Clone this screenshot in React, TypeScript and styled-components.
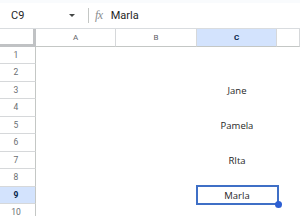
import React from "react";
import styled, { createGlobalStyle } from "styled-components";

const Global = createGlobalStyle`
  html, body { margin: 0; padding: 0; background: #ffffff; }
  body { font-family: Roboto, "Liberation Sans", Arial, sans-serif; overflow: hidden; }
`;

const Page = styled.div`
  width: 300px;
  height: 216px;
  overflow: hidden;
  background: #ffffff;
`;

const FormulaBar = styled.div`
  height: 29px;
  box-sizing: border-box;
  border-top: 3px solid #f9fbfd;
  border-bottom: 1px solid #d9dcdf;
  display: flex;
  align-items: center;
  background: #ffffff;
`;

const NameBox = styled.div`
  width: 58px;
  padding-left: 11px;
  font-size: 11px;
  color: #1f1f1f;
`;

const Caret = styled.div`
  width: 0;
  height: 0;
  border-left: 3px solid transparent;
  border-right: 3px solid transparent;
  border-top: 3.5px solid #444746;
  margin-right: 13px;
`;

const Divider = styled.div`
  width: 1px;
  height: 15px;
  background: #c4c7c5;
  margin-right: 6px;
`;

const Fx = styled.span`
  font-family: "Liberation Serif", "DejaVu Serif", serif;
  font-style: italic;
  font-size: 12px;
  color: #8a8d90;
  margin-right: 8px;
  letter-spacing: -0.5px;
`;

const FormulaText = styled.div`
  font-size: 11px;
  color: #1f1f1f;
`;

const Grid = styled.div`
  display: grid;
  grid-template-columns: 36px 80px 81px 80px 1fr;
  grid-auto-rows: 17.5px;
`;

const Corner = styled.div`
  box-sizing: border-box;
  border-right: 3px solid #c0c2c4;
  border-bottom: 3px solid #c0c2c4;
  background: #ffffff;
`;

const ColHead = styled.div<{ $active?: boolean }>`
  box-sizing: border-box;
  border-right: 1px solid #d6d8da;
  border-bottom: 1px solid #c4c7c5;
  background: ${(p) => (p.$active ? "#d3e3fd" : "#ffffff")};
  color: ${(p) => (p.$active ? "#041e49" : "#5f6368")};
  font-weight: ${(p) => (p.$active ? 700 : 400)};
  font-size: 8px;
  display: flex;
  align-items: center;
  justify-content: center;
`;

const RowHead = styled.div<{ $active?: boolean }>`
  box-sizing: border-box;
  border-right: 1px solid #c4c7c5;
  border-bottom: 1px solid #d6d8da;
  background: ${(p) => (p.$active ? "#d3e3fd" : "#ffffff")};
  color: ${(p) => (p.$active ? "#041e49" : "#6a6e72")};
  font-weight: ${(p) => (p.$active ? 700 : 400)};
  font-size: 8.5px;
  display: flex;
  align-items: center;
  justify-content: center;
  padding-right: 3px;
`;

const Cell = styled.div`
  position: relative;
  box-sizing: border-box;
  display: flex;
  align-items: center;
  justify-content: center;
  font-family: "Open Sans", "Liberation Sans", Arial, sans-serif;
  font-size: 9.5px;
  color: #1f1f1f;
  padding-top: 1px;
`;

const Selection = styled.div`
  position: absolute;
  left: -1px;
  top: -2px;
  right: -2px;
  bottom: -1px;
  border: 2px solid #3f6fc6;
  pointer-events: none;
`;

const Handle = styled.div`
  position: absolute;
  right: -5px;
  bottom: -5px;
  width: 7px;
  height: 7px;
  border-radius: 50%;
  background: #2d5fd3;
`;

const cols = ["A", "B", "C", "D"];
const data: Record<number, string> = { 3: "Jane", 5: "Pamela", 7: "RIta", 9: "Marla" };

export default function App() {
  const rows = Array.from({ length: 10 }, (_, i) => i + 1);
  return (
    <Page>
      <Global />
      <FormulaBar>
        <NameBox>C9</NameBox>
        <Caret />
        <Divider />
        <Fx>fx</Fx>
        <FormulaText>Marla</FormulaText>
      </FormulaBar>
      <Grid>
        <Corner />
        {cols.map((c) => (
          <ColHead key={c} $active={c === "C"}>
            {c === "D" ? "" : c}
          </ColHead>
        ))}
        {rows.map((r) => (
          <React.Fragment key={r}>
            <RowHead $active={r === 9}>{r}</RowHead>
            <Cell />
            <Cell />
            <Cell>
              {data[r] ?? ""}
              {r === 9 && (
                <Selection>
                  <Handle />
                </Selection>
              )}
            </Cell>
            <Cell />
          </React.Fragment>
        ))}
      </Grid>
    </Page>
  );
}
